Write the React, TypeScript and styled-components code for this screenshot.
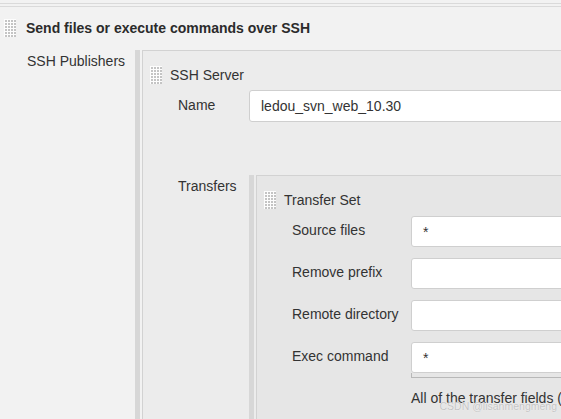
import React from "react";
import styled, { createGlobalStyle } from "styled-components";

const GlobalStyle = createGlobalStyle`
  html, body { margin: 0; padding: 0; background: #f2f2f2; overflow: hidden; }
  body { font-family: "Liberation Sans", Arial, sans-serif; color: #333; }
`;

const Page = styled.div`
  position: relative;
  width: 561px;
  height: 419px;
  overflow: hidden;
  background: #f2f2f2;
`;

const Content = styled.div`
  width: 780px;
`;

const TopRule = styled.div`
  margin-top: 3px;
  height: 2px;
  border-top: 1px solid #dadada;
  border-bottom: 1px solid #dadada;
`;

const SectionHeader = styled.div`
  display: flex;
  align-items: center;
  gap: 10px;
  padding: 12px 0 0 4px;
  height: 18px;
  margin-bottom: 13px;
`;

const SectionTitle = styled.span`
  font-weight: bold;
  font-size: 14px;
  color: #2b2b2b;
`;

const Body = styled.div`
  display: grid;
  grid-template-columns: 135px 1fr;
`;

const SideLabel = styled.div`
  font-size: 14px;
  line-height: 16px;
  padding: 3px 0 0 27px;
`;

const Repeated = styled.div`
  display: flex;
`;

const Bar = styled.div`
  width: 5px;
  background: #d7d7d7;
  margin-right: 2px;
`;

const Chunk = styled.div<{ $bg: string }>`
  flex: 1;
  background: ${(p) => p.$bg};
  border-top: 1px solid #d2d2d2;
  border-left: 1px solid #d2d2d2;
  padding: 15px 0 40px 7px;
`;

const ChunkHeader = styled.div`
  display: flex;
  align-items: center;
  gap: 8px;
  height: 18px;
  font-size: 14px;
`;

const Row = styled.div<{ $label: number; $top?: number; $pad?: number }>`
  display: grid;
  grid-template-columns: ${(p) => p.$label}px 1fr;
  align-items: start;
  margin-top: ${(p) => p.$top ?? 0}px;
  font-size: 14px;
  & > label {
    padding: ${(p) => p.$pad ?? 6}px 0 0 28px;
    line-height: 16px;
  }
`;

const Field = styled.div`
  display: flex;
  flex-direction: column;
`;

const Input = styled.div<{ $h: number }>`
  box-sizing: border-box;
  height: ${(p) => p.$h}px;
  background: #fff;
  border: 1px solid #cfcfcf;
  border-radius: 3px;
  padding-left: 11px;
  display: flex;
  align-items: center;
  font-size: 14px;
  color: #333;
  white-space: nowrap;
`;

const ResizeStrip = styled.div`
  height: 4px;
  border-left: 1px solid #b8b8b8;
  border-bottom: 1px solid #b8b8b8;
`;

const Note = styled.div`
  font-size: 14px;
  white-space: nowrap;
  line-height: 16px;
  margin-top: 12px;
`;

const Watermark = styled.div`
  position: absolute;
  right: 4px;
  top: 400px;
  font-size: 10.5px;
  color: #c4c4c4;
  text-shadow: 0 0 1px #fff;
  white-space: nowrap;
`;

const Handle = () => (
  <svg width="12" height="18" viewBox="0 0 12 18">
    <rect width="12" height="18" fill="#fdfdfd" />
    {[0, 1, 2, 3].map((c) =>
      [0, 1, 2, 3, 4, 5].map((r) => (
        <rect key={`${c}-${r}`} x={c * 3 + 1} y={r * 3 + 1} width="2" height="2" fill="#c4c4c4" />
      ))
    )}
  </svg>
);

const transferRows = [
  { label: "Source files", value: "*" },
  { label: "Remove prefix", value: "" },
  { label: "Remote directory", value: "" },
];

export default function App() {
  return (
    <>
      <GlobalStyle />
      <Page>
        <Content>
          <TopRule />
          <SectionHeader>
            <Handle />
            <SectionTitle>Send files or execute commands over SSH</SectionTitle>
          </SectionHeader>
          <Body>
            <SideLabel>SSH Publishers</SideLabel>
            <Repeated>
              <Bar />
              <Chunk $bg="#ececec">
                <ChunkHeader>
                  <Handle />
                  <span>SSH Server</span>
                </ChunkHeader>
                <Row $label={99} $top={6} $pad={7}>
                  <label>Name</label>
                  <Input $h={32}>ledou_svn_web_10.30</Input>
                </Row>
                <Row $label={99} $top={53} $pad={3}>
                  <label>Transfers</label>
                  <Repeated>
                    <Bar />
                    <Chunk $bg="#e6e6e6">
                      <ChunkHeader>
                        <Handle />
                        <span>Transfer Set</span>
                      </ChunkHeader>
                      {transferRows.map((r, i) => (
                        <Row key={r.label} $label={147} $top={i === 0 ? 7 : 11}>
                          <label>{r.label}</label>
                          <Input $h={31}>{r.value}</Input>
                        </Row>
                      ))}
                      <Row $label={147} $top={11}>
                        <label>Exec command</label>
                        <Field>
                          <Input $h={31}>*</Input>
                          <ResizeStrip />
                        </Field>
                      </Row>
                      <Row $label={147}>
                        <span />
                        <Note>
                          All of the transfer fields (except for Exec timeout) support substitution of Jenkins environment variables
                        </Note>
                      </Row>
                    </Chunk>
                  </Repeated>
                </Row>
              </Chunk>
            </Repeated>
          </Body>
        </Content>
        <Watermark>CSDN @lisanmengmeng</Watermark>
      </Page>
    </>
  );
}
